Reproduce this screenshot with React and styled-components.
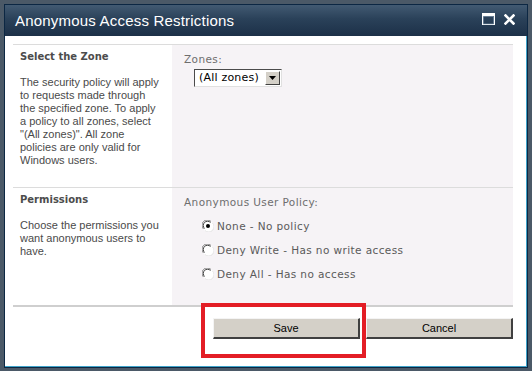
import React from "react";
import styled, { createGlobalStyle } from "styled-components";

const GlobalStyle = createGlobalStyle`
  html, body {
    margin: 0;
    padding: 0;
    background: #4b5967;
  }
  #root {
    width: 532px;
    height: 371px;
    overflow: hidden;
  }
`;

const Page = styled.div`
  position: relative;
  width: 532px;
  height: 371px;
  padding: 4px 4px 3px 4px;
  box-sizing: border-box;
`;

const Dialog = styled.div`
  height: 364px;
  border: 1px solid #0c2743;
  box-shadow: inset -1px -1px 0 #3fa3c9;
  background: #fff;
  display: flex;
  flex-direction: column;
  box-sizing: border-box;
`;

const TitleBar = styled.div`
  height: 31px;
  flex: none;
  background: linear-gradient(#425a72 0%, #2a4159 45%, #1c3048 100%);
  display: flex;
  align-items: center;
  justify-content: space-between;
  padding: 0 12px 0 10px;
  color: #fff;
  font-family: "Liberation Sans", Arial, sans-serif;
  font-size: 15px;
  letter-spacing: 0.2px;
`;

const TitleIcons = styled.div`
  display: flex;
  align-items: center;
  gap: 9px;
  margin-top: -3px;
`;

const Body = styled.div`
  position: relative;
  flex: 1;
  padding: 8px 14px 0 8px;
  font-family: "Liberation Sans", Arial, sans-serif;
`;

const Section = styled.div`
  display: grid;
  grid-template-columns: 159px 1fr;
  border-top: 1px solid #dcdcdc;
  height: ${(p) => p.$h}px;
`;

const Info = styled.div`
  padding: 6px 8px 0 7px;
  color: #4a4a4a;
`;

const InfoTitle = styled.div`
  font-family: "DejaVu Sans", sans-serif;
  font-weight: bold;
  font-size: 10px;
  color: #4c4c4c;
  margin-bottom: 14px;
`;

const InfoText = styled.div`
  font-size: 11px;
  line-height: 13px;
  color: #4a4a4a;
`;

const Field = styled.div`
  background: #f6f3f6;
  padding: 8px 12px 0 12px;
  font-family: "DejaVu Sans", sans-serif;
  font-size: 10.5px;
  letter-spacing: 0.4px;
  color: #6e6e6e;
`;

const Label = styled.div`
  margin-bottom: ${(p) => p.$mb || 3}px;
`;

const Select = styled.div`
  margin-left: 10px;
  width: 86px;
  height: 16px;
  display: flex;
  align-items: stretch;
  background: #fff;
  border-top: 1px solid #4b4b4b;
  border-left: 1px solid #4b4b4b;
  border-right: 1px solid #e0e0e0;
  border-bottom: 1px solid #e0e0e0;
  color: #000;
  font-size: 11px;
  letter-spacing: 0.2px;
`;

const SelectText = styled.span`
  flex: 1;
  padding-left: 4px;
  line-height: 16px;
`;

const SelectArrow = styled.span`
  width: 15px;
  margin: 1px;
  background: #d4d0c8;
  border-top: 1px solid #fff;
  border-left: 1px solid #fff;
  border-right: 1px solid #404040;
  border-bottom: 1px solid #404040;
  box-sizing: border-box;
  display: flex;
  align-items: center;
  justify-content: center;
`;

const RadioList = styled.div`
  display: flex;
  flex-direction: column;
  gap: 10px;
  padding-left: 18px;
`;

const RadioRow = styled.label`
  display: flex;
  align-items: center;
  gap: 3px;
  height: 14px;
  color: #5a5a5a;
  font-size: 10.5px;
`;

const Radio = ({ checked }) => (
  <svg width="12" height="12" viewBox="0 0 12 12">
    <circle cx="6" cy="6" r="5.5" fill="#fff" />
    <path d="M1.5 9 A5 5 0 0 1 9 1.5" fill="none" stroke="#808080" strokeWidth="1" />
    <path d="M2.5 8.5 A4 4 0 0 1 8.5 2.5" fill="none" stroke="#404040" strokeWidth="1" />
    <path d="M10.5 3 A5 5 0 0 1 3 10.5" fill="none" stroke="#e6e6e6" strokeWidth="1" />
    {checked && <circle cx="6" cy="6" r="2" fill="#000" />}
  </svg>
);

const Footer = styled.div`
  border-top: 2px solid #cfcfcf;
  display: flex;
  justify-content: flex-end;
  gap: 6px;
  padding-top: 11px;
`;

const Button = styled.button`
  width: 147px;
  height: 21px;
  padding: 0;
  background: #d4d0c8;
  border-top: 1px solid #f4f4f4;
  border-left: 1px solid #f4f4f4;
  border-right: 2px solid #404040;
  border-bottom: 2px solid #404040;
  font-family: "Liberation Sans", Arial, sans-serif;
  font-size: 11px;
  color: #000;
`;

const Highlight = styled.div`
  position: absolute;
  left: 196px;
  top: 267px;
  width: 157px;
  height: 47px;
  border: 4px solid #e31d25;
  pointer-events: none;
`;

const MaximizeIcon = () => (
  <svg width="13" height="12" viewBox="0 0 13 12">
    <rect x="0.5" y="0.5" width="12" height="11" fill="none" stroke="#fff" />
    <rect x="1" y="1" width="11" height="2" fill="#fff" />
    <rect x="1.5" y="3.5" width="10" height="7.5" fill="none" stroke="#8aa0b6" strokeWidth="0.6" />
  </svg>
);

const CloseIcon = () => (
  <svg width="11" height="11" viewBox="0 0 11 11">
    <path d="M1.5 1.5 L9.5 9.5 M9.5 1.5 L1.5 9.5" stroke="#fff" strokeWidth="2.6" strokeLinecap="square" />
  </svg>
);

export default function App() {
  return (
    <>
      <GlobalStyle />
      <Page>
        <Dialog>
          <TitleBar>
            <span>Anonymous Access Restrictions</span>
            <TitleIcons>
              <MaximizeIcon />
              <CloseIcon />
            </TitleIcons>
          </TitleBar>
          <Body>
            <Section $h={142}>
              <Info>
                <InfoTitle>Select the Zone</InfoTitle>
                <InfoText>
                  The security policy will apply
                  <br />
                  to requests made through
                  <br />
                  the specified zone. To apply
                  <br />
                  a policy to all zones, select
                  <br />
                  "(All zones)". All zone
                  <br />
                  policies are only valid for
                  <br />
                  Windows users.
                </InfoText>
              </Info>
              <Field>
                <Label $mb={4}>Zones:</Label>
                <Select>
                  <SelectText>(All zones)</SelectText>
                  <SelectArrow>
                    <svg width="7" height="4" viewBox="0 0 7 4">
                      <path d="M0 0 H7 L3.5 4 Z" fill="#000" />
                    </svg>
                  </SelectArrow>
                </Select>
              </Field>
            </Section>
            <Section $h={117}>
              <Info>
                <InfoTitle>Permissions</InfoTitle>
                <InfoText>
                  Choose the permissions you
                  <br />
                  want anonymous users to
                  <br />
                  have.
                </InfoText>
              </Info>
              <Field>
                <Label $mb={11}>Anonymous User Policy:</Label>
                <RadioList>
                  <RadioRow>
                    <Radio checked />
                    None - No policy
                  </RadioRow>
                  <RadioRow>
                    <Radio />
                    Deny Write - Has no write access
                  </RadioRow>
                  <RadioRow>
                    <Radio />
                    Deny All - Has no access
                  </RadioRow>
                </RadioList>
              </Field>
            </Section>
            <Footer>
              <Button>Save</Button>
              <Button>Cancel</Button>
            </Footer>
            <Highlight />
          </Body>
        </Dialog>
      </Page>
    </>
  );
}
